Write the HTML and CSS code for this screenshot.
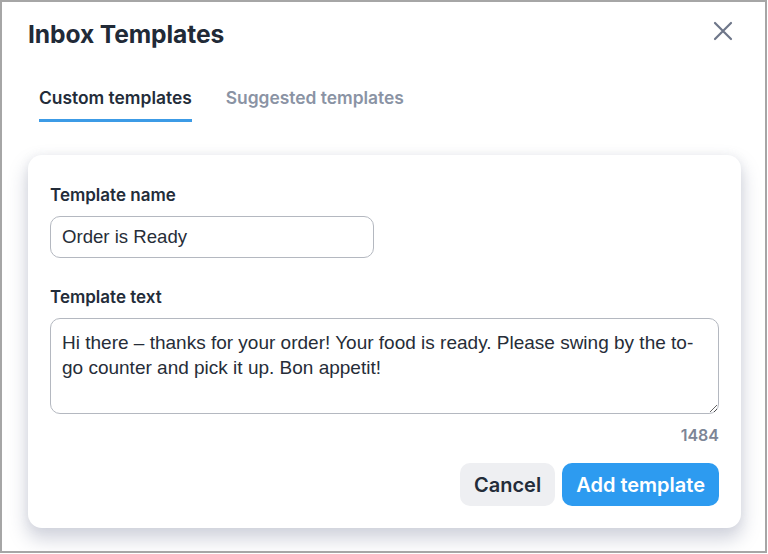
FILE: index.html
```html
<!DOCTYPE html>
<html lang="en">
<head>
<meta charset="utf-8">
<title>Inbox Templates</title>
<link rel="stylesheet" href="styles.css">
</head>
<body>
<div class="frame">
  <header class="dialog-head">
    <h1 class="dialog-title">Inbox Templates</h1>
    <button class="close-btn" aria-label="Close">
      <svg width="20" height="20" viewBox="0 0 20 20" fill="none" stroke="currentColor" stroke-width="2.2" stroke-linecap="round">
        <path d="M2 2 L18 18 M18 2 L2 18"/>
      </svg>
    </button>
  </header>

  <nav class="tabs">
    <span class="tab tab-active">Custom templates</span>
    <span class="tab">Suggested templates</span>
  </nav>

  <section class="card">
    <label class="field-label" for="tpl-name">Template name</label>
    <input id="tpl-name" class="text-input" type="text" value="Order is Ready">

    <label class="field-label field-label-second" for="tpl-text">Template text</label>
    <textarea id="tpl-text" class="text-area">Hi there – thanks for your order! Your food is ready. Please swing by the to-go counter and pick it up. Bon appetit!</textarea>
    <div class="counter">1484</div>

    <div class="actions">
      <button class="btn btn-secondary">Cancel</button>
      <button class="btn btn-primary">Add template</button>
    </div>
  </section>
</div>
</body>
</html>
```

FILE: styles.css
```css
* {
  box-sizing: border-box;
}

html, body {
  margin: 0;
  padding: 0;
  background: #ffffff;
}

.frame {
  width: 767px;
  height: 553px;
  border: 2px solid #a6a6a6;
  background: #ffffff;
  font-family: Inter, "Open Sans", sans-serif;
  color: #222b38;
  overflow: hidden;
}

.dialog-head {
  display: flex;
  justify-content: space-between;
  align-items: flex-start;
  padding: 16px 32px 0 26px;
}

.dialog-title {
  margin: 0;
  font-size: 24.6px;
  font-weight: 700;
  letter-spacing: -0.1px;
  line-height: 32px;
  color: #212a37;
}

.close-btn {
  border: 0;
  background: none;
  padding: 0;
  margin-top: 3px;
  color: #6e7689;
  width: 20px;
  height: 20px;
  cursor: pointer;
}

.tabs {
  display: flex;
  gap: 34px;
  padding: 0 0 0 37px;
  margin-top: 37px;
}

.tab {
  font-size: 17.4px;
  font-weight: 600;
  color: #8a93a4;
  padding-bottom: 10px;
  line-height: 22px;
  border-bottom: 3px solid transparent;
}

.tab-active {
  color: #232c39;
  border-bottom-color: #3c9be6;
}

.card {
  margin: 33px 0 0 26px;
  width: 713px;
  height: 373px;
  border-radius: 14px;
  background: #ffffff;
  box-shadow: 0 10px 18px 2px rgba(120, 128, 155, 0.32), 0 0 10px rgba(150, 155, 170, 0.12);
  padding: 30px 22px 22px 22px;
  display: flex;
  flex-direction: column;
}

.field-label {
  font-size: 17px;
  font-weight: 600;
  color: #232c39;
  line-height: 21px;
}

.field-label-second {
  margin-top: 29px;
}

.text-input {
  margin-top: 10px;
  width: 324px;
  height: 42px;
  border: 1px solid #b4b8c0;
  border-radius: 10px;
  padding: 0 11px;
  font-family: "Liberation Sans", Arial, sans-serif;
  font-size: 18.6px;
  color: #262d38;
  outline: none;
}

.text-area {
  margin-top: 10px;
  width: 669px;
  height: 96px;
  border: 1px solid #b4b8c0;
  border-radius: 10px;
  padding: 11px 11px;
  font-family: "Liberation Sans", Arial, sans-serif;
  font-size: 19px;
  line-height: 25px;
  color: #262d38;
  resize: vertical;
  outline: none;
}

.counter {
  margin-top: 12px;
  text-align: right;
  font-size: 16px;
  font-weight: 600;
  color: #7d8596;
  line-height: 18px;
}

.actions {
  margin-top: auto;
  display: flex;
  justify-content: flex-end;
  gap: 7px;
}

.btn {
  height: 43px;
  border: 0;
  border-radius: 10px;
  font-family: Inter, "Open Sans", sans-serif;
  font-size: 20px;
  font-weight: 600;
  padding: 0 14px;
  cursor: pointer;
}

.btn-secondary {
  background: #eeeff2;
  color: #232c39;
}

.btn-primary {
  background: #2d9bf0;
  color: #ffffff;
}
```
